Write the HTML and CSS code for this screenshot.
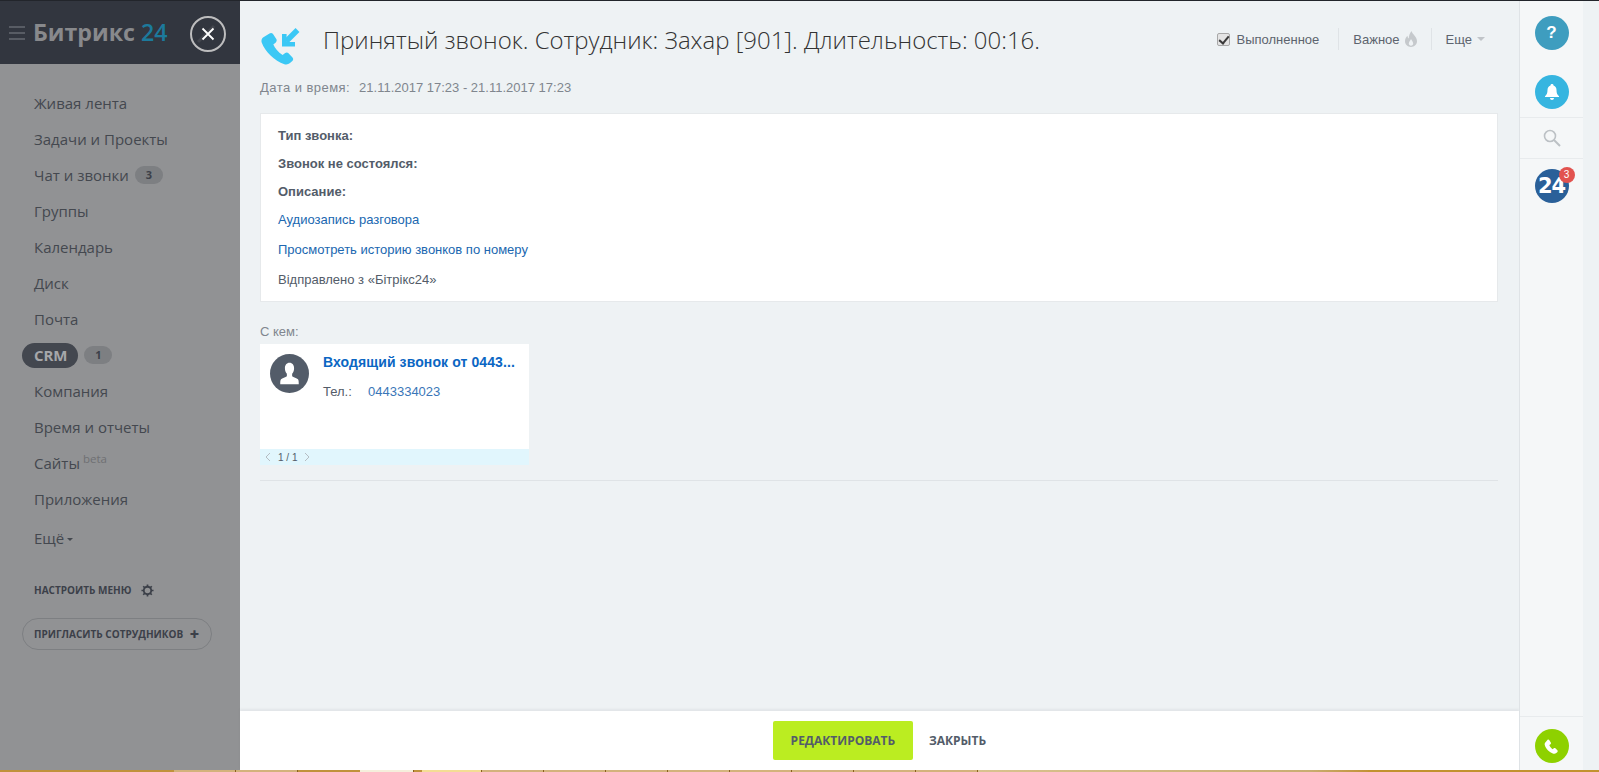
FILE: index.html
```html
<!DOCTYPE html>
<html lang="ru">
<head>
<meta charset="utf-8">
<title>Принятый звонок</title>
<link rel="stylesheet" href="styles.css">
</head>
<body>
<div class="app">
  <div class="topline"></div>
  <div class="main">
    <aside class="sidebar">
      <header class="brand">
        <div class="burger"><i></i><i></i><i></i></div>
        <div class="logo">Битрикс <span>24</span></div>
        <button class="close" aria-label="Закрыть">
          <svg viewBox="0 0 14 14" width="14" height="14"><path d="M-3 15L13 -1" stroke="#43464e" stroke-width="3" fill="none"/><path d="M1.500 1.500l11 11M12.500 1.500l-11 11" stroke="#fff" stroke-width="1.800" fill="none"/></svg>
        </button>
      </header>
      <nav class="menu">
        <div class="item">Живая лента</div>
        <div class="item">Задачи и Проекты</div>
        <div class="item">Чат и звонки <span class="count">3</span></div>
        <div class="item">Группы</div>
        <div class="item">Календарь</div>
        <div class="item">Диск</div>
        <div class="item">Почта</div>
        <div class="item item-active"><span class="pill">CRM</span> <span class="count">1</span></div>
        <div class="item">Компания</div>
        <div class="item">Время и отчеты</div>
        <div class="item">Сайты <sup class="beta">beta</sup></div>
        <div class="item">Приложения</div>
        <div class="item item-more">Ещё <span class="mini-caret"></span></div>
      </nav>
      <div class="settings">
        <span>Настроить меню</span>
        <svg viewBox="0 0 14 14" width="13" height="13"><circle cx="7" cy="7" r="4" fill="none" stroke="#3c4049" stroke-width="2"/><path d="M7 .5v2.500M7 11v2.500M.5 7H3M11 7h2.500M2.400 2.400l1.800 1.800M9.800 9.800l1.800 1.800M11.600 2.400L9.800 4.200M4.200 9.800l-1.800 1.800" stroke="#3c4049" stroke-width="1.800"/></svg>
      </div>
      <button class="invite"><span>Пригласить сотрудников</span><b>+</b></button>
    </aside>

    <section class="panel">
      <div class="content">
        <div class="head">
          <svg class="call-icon" viewBox="0 0 40 40" width="40" height="40">
            <path fill="#3bc8f5" d="M9.500 5.500c1.200-.9 2.700-.6 3.500.6l3.300 5c.7 1.100.5 2.500-.5 3.300l-2.500 2.100c1.600 3.800 4.800 7.600 9.300 10.500l2.600-2c1-.8 2.400-.7 3.300.2l4 4.300c1 1.100.9 2.700-.2 3.600l-2.300 2c-1.500 1.300-3.700 1.800-5.600 1.100C14.500 33 5 23.800 1.700 14.600c-.6-1.800-.1-3.800 1.300-5.100z"/>
            <path d="M37.500 2L26 13.500" stroke="#3bc8f5" stroke-width="5.500" fill="none"/>
            <path d="M22 6v12.500h13v-4.600h-8.400V6z" fill="#3bc8f5"/>
          </svg>
          <h1>Принятый звонок. Сотрудник: Захар [901]. Длительность: 00:16.</h1>
          <div class="actions">
            <label class="done"><input type="checkbox" checked>Выполненное</label>
            <span class="action action-important">Важное
              <svg viewBox="0 0 12 16" width="12" height="16"><path fill="#c5c9cc" fill-rule="evenodd" d="M6.500 0c.5 3 5.500 5.500 5.500 10.300C12 13.500 9.300 16 6 16s-6-2.500-6-5.700C0 8 1.200 6 2.500 4.800c.1 1.300.5 2.200 1.300 2.800C3.800 4.800 4.800 2 6.500 0zM6 8c-.3 1.500-2.200 2.500-2.200 4.500 0 1.300 1 2.200 2.200 2.200s2.200-.9 2.200-2.200C8.200 10.500 6.500 9.500 6 8z"/></svg>
            </span>
            <span class="action action-more">Еще <span class="caret"></span></span>
          </div>
        </div>
        <div class="when"><span class="when-label">Дата и время:</span><span class="when-value">21.11.2017 17:23 - 21.11.2017 17:23</span></div>
        <div class="box">
          <div class="row"><b>Тип звонка:</b></div>
          <div class="row"><b>Звонок не состоялся:</b></div>
          <div class="row"><b>Описание:</b></div>
          <div class="row row-link"><a href="#">Аудиозапись разговора</a></div>
          <div class="row row-wide"><a href="#">Просмотреть историю звонков по номеру</a></div>
          <div class="row row-wide">Відправлено з «Бітрікс24»</div>
        </div>
        <div class="with">С кем:</div>
        <div class="card">
          <div class="card-body">
            <svg class="avatar" viewBox="0 0 40 40" width="39" height="39">
              <circle cx="20" cy="20" r="20" fill="#535c69"/>
              <path fill="#fff" d="M20 9c3 0 4.700 2.500 4.700 5.500 0 2.500-.9 4.500-2 5.700v2.500c1.300 1.200 4.800 1.800 6 3.300.6.800.8 1.800.8 5H10.500c0-3.200.2-4.200.8-5 1.200-1.500 4.700-2.100 6-3.300v-2.500c-1.100-1.200-2-3.200-2-5.700C15.300 11.500 17 9 20 9z"/>
            </svg>
            <div class="card-info">
              <a class="card-title" href="#">Входящий звонок от 0443...</a>
              <div class="card-tel"><span>Тел.:</span><a href="#">0443334023</a></div>
            </div>
          </div>
          <div class="pager">
            <svg viewBox="0 0 6 10" width="6" height="10"><path d="M5 1L1 5l4 4" fill="none" stroke="#b5bcc2"/></svg>
            <span>1 / 1</span>
            <svg viewBox="0 0 6 10" width="6" height="10"><path d="M1 1l4 4-4 4" fill="none" stroke="#b5bcc2"/></svg>
          </div>
        </div>
        <div class="rule"></div>
      </div>
      <footer class="footer">
        <button class="btn-edit">Редактировать</button>
        <button class="btn-close">Закрыть</button>
      </footer>
    </section>

    <aside class="rightbar">
      <div class="rb-top">
        <div class="round round-help">?</div>
        <div class="round round-bell">
          <svg viewBox="0 0 16 16" width="16" height="16"><path fill="#fff" d="M8 0c1 0 1.500.6 1.500 1.400C11.500 2 12.500 3.600 12.500 6c0 3 .7 4.800 2.500 6.300v.7H1v-.7C2.800 10.800 3.500 9 3.500 6c0-2.400 1-4 3-4.600C6.500.6 7 0 8 0zM6 14h4c0 1.200-.9 2-2 2s-2-.8-2-2z"/></svg>
        </div>
      </div>
      <div class="rb-search">
        <svg viewBox="0 0 18 18" width="18" height="18"><circle cx="7" cy="7" r="5.500" fill="none" stroke="#bcc1c5" stroke-width="1.600"/><path d="M11 11l6 6" stroke="#bcc1c5" stroke-width="2"/></svg>
      </div>
      <div class="rb-b24">
        <div class="round round-24">24<span class="badge">3</span></div>
      </div>
      <div class="rb-phone">
        <div class="round round-phone">
          <svg viewBox="0 0 24 24" width="17" height="17"><path fill="#fff" d="M6.500 2.500c.8-.6 1.900-.4 2.500.5l2 3.300c.5.800.3 1.800-.4 2.400l-1.700 1.300c.9 2.200 2.400 4.200 4.600 5.800l1.800-1.300c.8-.6 1.800-.5 2.500.2l2.500 2.700c.7.800.6 2-.2 2.700l-1.400 1.200c-1.100 1-2.700 1.300-4 .8C8.600 20 4 15.100 2.500 9.800c-.4-1.400 0-2.900 1.100-3.900z"/></svg>
        </div>
      </div>
    </aside>
    <div class="gutter"></div>
  </div>
  <div class="taskbar">
    <i class="t-bg t-w174"></i><i class="tab tab-tan t-w62"></i><i class="tab tab-tan t-w62"></i>
    <i class="t-bg t-w62"></i><i class="tab tab-pale t-w54"></i><i class="t-gap"></i><i class="tab tab-yel t-w60"></i>
    <i class="tab tab-tan t-w62"></i><i class="tab tab-tan t-w62"></i><i class="tab tab-tan t-w62"></i><i class="tab tab-tan t-w62"></i><i class="tab tab-tan t-w62"></i>
    <i class="tab tab-tan t-w62"></i><i class="tab tab-tan t-w62"></i><i class="tab tab-tan t-w62"></i>
    <i class="t-fade"></i><i class="t-orange"></i>
  </div>
</div>
</body>
</html>
```
FILE: styles.css
```css
* { box-sizing: border-box; }
html, body { margin: 0; height: 100%; overflow: hidden; }
body { font-family: "Liberation Sans", Arial, sans-serif; background: #eef2f4; color: #535c69; }
button { font: inherit; border: 0; background: none; padding: 0; }
a { color: #2067b0; text-decoration: none; }

.app { width: 1599px; height: 772px; display: flex; flex-direction: column; }
.topline { height: 1px; background: #22252b; flex: none; }
.main { flex: 1; display: flex; min-height: 0; }

/* Sidebar */
.sidebar { width: 240px; flex: none; background: #919294; font-family: "Open Sans", sans-serif; color: #44484f; }
.brand { height: 63px; background: #32363f; display: flex; align-items: center; position: relative; }
.burger { width: 16px; margin-left: 9px; display: flex; flex-direction: column; gap: 4px; }
.burger i { display: block; height: 2px; background: #585c64; }
.logo { margin: 0 0 2px 8px; font-size: 23.200px; font-weight: 700; color: #88898c; white-space: nowrap; }
.logo span { color: #1c7a9c; font-weight: 600; }
.close { position: absolute; left: 190px; top: 15px; width: 36px; height: 36px; border-radius: 50%; border: 2px solid #bdbdbe; display: flex; align-items: center; justify-content: center; }
.close svg { overflow: visible; }
.menu { padding-top: 21px; }
.item { height: 36px; line-height: 36px; padding-left: 34px; font-size: 15px; white-space: nowrap; display: flex; align-items: center; gap: 6px; }
.count { display: inline-block; min-width: 28px; height: 18px; line-height: 18px; border-radius: 9px; background: #7d7f82; color: #3c4049; font-size: 11px; font-weight: 700; text-align: center; }
.item-active { padding-left: 22px; }
.pill { display: inline-block; height: 25px; line-height: 24px; padding: 0 11px 0 12px; border-radius: 13px; background: #43474f; color: #a6a7aa; font-weight: 700; font-size: 15px; letter-spacing: -.1px; }
.beta { font-size: 11.500px; color: #6f7073; line-height: 1; align-self: flex-start; margin-top: 8px; margin-left: -3px; vertical-align: baseline; }
.item-more { margin-top: 3px; gap: 3px; }
.mini-caret { display: inline-block; border: 3px solid transparent; border-top-color: #44484f; border-bottom: 0; margin-top: 3px; }
.settings { margin: 27px 0 0 34px; height: 14px; display: flex; align-items: center; gap: 10px; font-size: 10px; font-weight: 700; text-transform: uppercase; color: #3c4049; }
.invite { margin: 21px 0 0 22px; width: 190px; height: 32px; border: 1px solid #7d7f82; border-radius: 16px; display: flex; align-items: center; justify-content: space-between; padding: 0 12px 0 11px; font-size: 10px; font-weight: 700; text-transform: uppercase; color: #3c4049; font-family: "Open Sans", sans-serif; white-space: nowrap; }
.invite b { font-size: 16px; line-height: 1; }

/* Panel */
.panel { flex: 1; min-width: 0; display: flex; flex-direction: column; }
.content { flex: 1; padding: 0 21px 0 20px; min-height: 0; }
.head { height: 76px; display: flex; align-items: center; position: relative; }
.call-icon { flex: none; margin: 17px 23px 0 0; }
h1 { margin: 0; font-family: "Open Sans", sans-serif; font-weight: 300; font-size: 23.960px; color: #333; white-space: nowrap; }
.actions { margin-left: auto; margin-right: 13px; display: flex; align-items: center; font-size: 13px; color: #5d646e; }
.done { display: flex; align-items: center; gap: 6px; padding-right: 19px; }
.done input { appearance: none; margin: 0; width: 13px; height: 13px; background: #e4e4e4; border: 1px solid #a8a8a8; border-radius: 2px; position: relative; }
.done input::after { content: ""; position: absolute; left: 3px; top: 0; width: 4px; height: 8px; border: solid #3a3a3a; border-width: 0 2px 2px 0; transform: rotate(40deg); }
.action { height: 22px; display: flex; align-items: center; border-left: 1px solid #dfe3e6; padding-left: 14px; }
.action-important { gap: 5px; padding-right: 14px; }
.caret { display: inline-block; border: 4px solid transparent; border-top-color: #c0c4c8; border-bottom: 0; margin-left: 5px; }
.when { font-size: 13px; color: #80868e; height: 36px; padding-top: 3px; display: flex; }
.when-label { letter-spacing: .45px; margin-right: 9px; }
.box { background: #fff; border: 1px solid #e6e9eb; height: 189px; padding: 8px 17px 0; font-size: 13px; }
.row { height: 28px; line-height: 28px; }
.row b { color: #535c69; }
.row-link { height: 29px; }
.row-wide { height: 30px; line-height: 30px; }
.with { margin-top: 23px; font-size: 13px; color: #80868e; height: 19px; line-height: 14px; }
.card { width: 269px; }
.card-body { background: #fff; height: 105px; display: flex; padding: 10px 0 0 10px; }
.avatar { flex: none; margin: 0 14px 0 0; }
.card-title { display: block; font-weight: 700; font-size: 14px; letter-spacing: .1px; color: #0b66c3; line-height: 18px; white-space: nowrap; margin-top: -1px; }
.card-tel { display: flex; margin-top: 12px; font-size: 13px; line-height: 18px; }
.card-tel span { width: 45px; }
.card-tel a { font-size: 13px; color: #3a76b8; }
.pager { height: 16px; background: #e1f6fd; display: flex; align-items: center; gap: 7px; padding-left: 5px; font-size: 10px; color: #535c69; }
.rule { margin-top: 15px; height: 1px; background: #dfe3e6; }

.footer { height: 59px; flex: none; background: #fff; box-shadow: 0 -2px 2px rgba(83,92,105,.08); display: flex; align-items: center; justify-content: center; gap: 16px; font-family: "Open Sans", sans-serif; font-weight: 700; font-size: 12px; color: #535c69; text-transform: uppercase; }
.btn-edit { width: 140px; height: 39px; border-radius: 2px; background: #bbed21; font: inherit; color: inherit; text-transform: inherit; }
.btn-close { font: inherit; color: inherit; text-transform: inherit; }

/* Right bar */
.rightbar { width: 64px; flex: none; background: #f5f7f8; border-left: 1px solid #dfe3e6; display: flex; flex-direction: column; align-items: stretch; }
.gutter { width: 16px; flex: none; background: #eef2f4; }
.round { width: 34px; height: 34px; border-radius: 50%; display: flex; align-items: center; justify-content: center; color: #fff; font-weight: 700; position: relative; }
.rb-top { height: 117px; padding-top: 15px; display: flex; flex-direction: column; align-items: center; gap: 25px; border-bottom: 1px solid #e8ebed; }
.round-help { background: #3e9dbf; font-size: 17px; }
.round-bell { background: #36b5e0; }
.rb-search { height: 41px; display: flex; align-items: center; justify-content: center; border-bottom: 1px solid #e8ebed; }
.rb-b24 { flex: 1; padding-top: 10px; display: flex; justify-content: center; }
.round-24 { background: #2a6099; font-size: 21px; font-family: "DejaVu Sans", sans-serif; letter-spacing: -1px; }
.badge { position: absolute; top: -2px; right: -6px; width: 16px; height: 16px; border-radius: 50%; background: #e2534f; font-size: 10px; line-height: 16px; text-align: center; font-family: "Liberation Sans", sans-serif; font-weight: 400; letter-spacing: 0; }
.rb-phone { height: 54px; border-top: 1px solid #e8ebed; display: flex; justify-content: center; padding-top: 12px; }
.round-phone { background: #8ed100; }

/* Taskbar sliver */
.taskbar { height: 2px; flex: none; display: flex; background: #c29237; }
.taskbar i { display: block; height: 2px; flex: none; }
.t-bg { background: #c0923c; }
.tab { border-right: 1px solid #8a5f20; }
.tab-tan { background: #d3b27c; }
.tab-pale { background: #f5efdc; }
.tab-yel { background: #f4dd94; }
.t-gap { width: 8px; background: #c0923c; }
.t-w174 { width: 174px; }
.t-w62 { width: 62px; }
.t-w54 { width: 54px; }
.t-w60 { width: 60px; }
.taskbar .t-fade { flex: none; width: 390px; background: linear-gradient(90deg, #d9c28f, #c9ad72 85%, #c29237); }
.taskbar .t-orange { flex: 1; background: #c2922f; }
```
